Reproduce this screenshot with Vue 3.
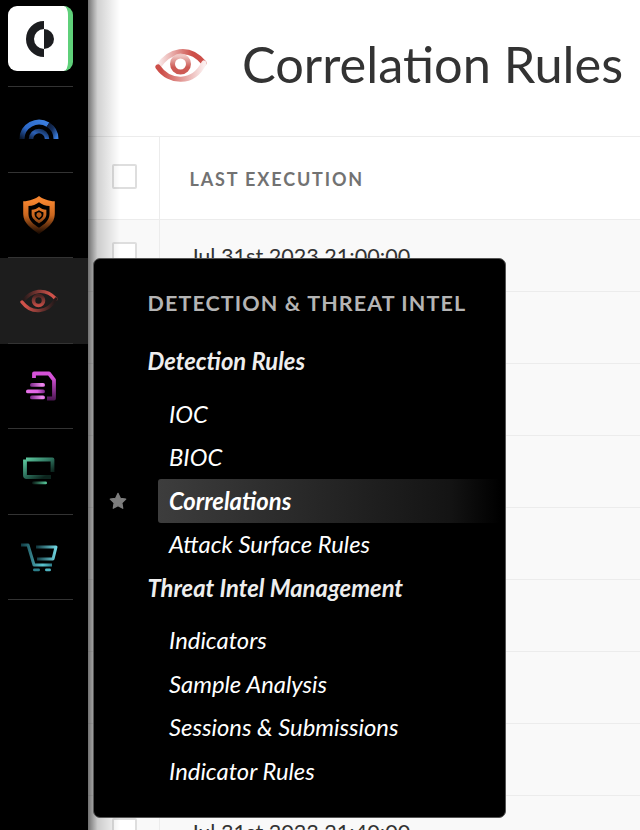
<script setup>
const dates = ['Jul 31st 2023 21:00:00','','','','','','','','Jul 31st 2023 21:40:00']
const groups = [
  { title: 'Detection Rules', items: ['IOC','BIOC','Correlations','Attack Surface Rules'] },
  { title: 'Threat Intel Management', items: ['Indicators','Sample Analysis','Sessions & Submissions','Indicator Rules'] },
]
</script>

<template>
  <div class="page">
    <aside class="rail">
      <div class="rail-cell logo-cell">
        <div class="logo">
          <svg class="logo-mark" width="28" height="36" viewBox="0 0 28 36">
            <path d="M18 0 A18 18 0 0 0 18 36 V28 A10 10 0 0 1 18 8 Z" fill="#1c1d20"/>
            <path d="M18 8 A10 10 0 0 1 18 28 Z" fill="#1c1d20"/>
          </svg>
        </div>
      </div>
      <div class="rail-cell">
        <svg class="ic-blue" width="40" height="22" viewBox="0 0 40 22">
          <defs>
            <linearGradient id="blue" x1="0" y1="1" x2="1" y2="0"><stop offset="0" stop-color="#0a1830"/><stop offset=".4" stop-color="#2c68c8"/><stop offset="1" stop-color="#3b7fe0"/></linearGradient>
            <linearGradient id="blue2" x1="0" y1="0" x2="1" y2="1"><stop offset="0" stop-color="#0e1c38"/><stop offset=".45" stop-color="#16305e"/><stop offset="1" stop-color="#3b7fe0"/></linearGradient>
            <linearGradient id="blue3" x1="0" y1="1" x2="1" y2="0"><stop offset="0" stop-color="#12284e"/><stop offset=".5" stop-color="#2c62b8"/><stop offset="1" stop-color="#122a50"/></linearGradient>
          </defs>
          <path d="M3 21 A17 17 0 0 1 29 6.7" fill="none" stroke="url(#blue)" stroke-width="5"/>
          <path d="M29 6.7 A17 17 0 0 1 37 21" fill="none" stroke="url(#blue2)" stroke-width="5"/>
          <path d="M12 21 A8 8 0 0 1 28 21" fill="none" stroke="url(#blue3)" stroke-width="4.5"/>
        </svg>
      </div>
      <div class="rail-cell">
        <svg width="36" height="40" viewBox="0 0 34 38">
          <defs><linearGradient id="org" gradientUnits="userSpaceOnUse" x1="0" y1="6" x2="0" y2="36"><stop offset="0" stop-color="#f5842e"/><stop offset=".45" stop-color="#c9661f"/><stop offset="1" stop-color="#1d0c02"/></linearGradient></defs>
          <path d="M17 1 C20 3.5 26 6 32 6 V18 C32 27 24 32 17 37 C10 32 2 27 2 18 V6 C8 6 14 3.5 17 1 Z" fill="url(#org)"/>
          <path d="M17 7 C20 9 23 10.5 27 10.5 V18 C27 24 22 28 17 31 C12 28 7 24 7 18 V10.5 C11 10.5 14 9 17 7 Z" fill="#000"/>
          <path d="M17 11.5 C19 13 21 14 24 14 V18.5 C24 22 20 25 17 27 C14 25 10 22 10 18.5 V14 C13 14 15 13 17 11.5 Z" fill="url(#org)"/>
          <path d="M17 14.5 C18.5 15.5 20 16.3 21.2 16.4 V18.5 C21.2 20.6 19 22.6 17 23.8 C15 22.6 12.8 20.6 12.8 18.5 V16.4 C14 16.3 15.5 15.5 17 14.5 Z" fill="#000"/>
          <path d="M17 16.5 C18.5 16.5 19.5 17.7 19.5 19 C19.5 20.2 18 21.5 17 22 C16 21.5 14.5 20.2 14.5 19 C14.5 17.7 15.5 16.5 17 16.5 Z" fill="#b85d1c"/>
        </svg>
      </div>
      <div class="rail-cell active">
        <svg width="38" height="26" viewBox="0 0 38 26">
          <defs>
            <linearGradient id="eyeA" x1="0" y1="0" x2="1" y2="0"><stop offset=".05" stop-color="#241a1a"/><stop offset=".85" stop-color="#d0524a"/></linearGradient>
            <linearGradient id="eyeB" x1="0" y1="0" x2="1" y2="0"><stop offset=".1" stop-color="#d0524a"/><stop offset=".95" stop-color="#241a1a"/></linearGradient>
            <linearGradient id="eyeC" x1="0" y1="0" x2="0" y2="1"><stop offset="0" stop-color="#4a2422"/><stop offset="1" stop-color="#c04c45"/></linearGradient>
          </defs>
          <path d="M2 14 C11 2 25 -1 36 11" fill="none" stroke="url(#eyeA)" stroke-width="3.4" stroke-linecap="round"/>
          <path d="M2 14 C11 26 27 26 36 11" fill="none" stroke="url(#eyeB)" stroke-width="3.4" stroke-linecap="round"/>
          <circle cx="18.5" cy="12.5" r="5" fill="none" stroke="url(#eyeC)" stroke-width="3.6"/>
        </svg>
      </div>
      <div class="rail-cell">
        <svg width="34" height="32" viewBox="0 0 34 32">
          <defs>
            <linearGradient id="pk" gradientUnits="userSpaceOnUse" x1="0" y1="2" x2="0" y2="30"><stop offset=".2" stop-color="#d552d8"/><stop offset="1" stop-color="#4c1653"/></linearGradient>
            <linearGradient id="pk2" x1="0" y1="0" x2="1" y2="0"><stop offset="0" stop-color="#7a2688"/><stop offset=".8" stop-color="#f08af0"/><stop offset="1" stop-color="#e270e6"/></linearGradient>
            <linearGradient id="pk3" x1="0" y1="0" x2="1" y2="0"><stop offset="0" stop-color="#e873e8"/><stop offset=".6" stop-color="#e063e4"/><stop offset="1" stop-color="#7a2688"/></linearGradient>
          </defs>
          <path d="M12 8 V3.5 H27 L32 10 V28.5 H25" fill="none" stroke="url(#pk)" stroke-width="3.8" stroke-linejoin="round"/>
          <rect x="8" y="13" width="15" height="3.8" rx="1.9" fill="url(#pk2)"/>
          <rect x="4" y="19.5" width="19" height="3.8" rx="1.9" fill="url(#pk3)"/>
          <rect x="8" y="25.5" width="15" height="3.8" rx="1.9" fill="url(#pk2)"/>
        </svg>
      </div>
      <div class="rail-cell">
        <svg class="ic-mon" width="32" height="28" viewBox="0 0 32 28">
          <defs>
            <linearGradient id="gr" x1="0" y1="0" x2="1" y2="1"><stop offset="0" stop-color="#5cc79d"/><stop offset=".45" stop-color="#2f7560"/><stop offset=".85" stop-color="#0c241d"/></linearGradient>
            <linearGradient id="gr2" x1="0" y1="0" x2="1" y2="0"><stop offset="0" stop-color="#071410"/><stop offset="1" stop-color="#5bcfa0"/></linearGradient>
          </defs>
          <path d="M3 2.5 H29.5 V15 M28 20 H3.5 Q2 20 2 18.5 V2.5" fill="none" stroke="url(#gr)" stroke-width="3.8" stroke-linejoin="round"/>
          <rect x="9" y="24.5" width="15" height="2.8" rx="1.4" fill="url(#gr2)"/>
        </svg>
      </div>
      <div class="rail-cell">
        <svg width="38" height="30" viewBox="0 0 38 30">
          <defs>
            <linearGradient id="cy" x1="0" y1="0" x2="1" y2="0"><stop offset="0" stop-color="#0e343b"/><stop offset="1" stop-color="#6fd4df"/></linearGradient>
            <linearGradient id="cy2" x1="0" y1="0" x2="1" y2="0"><stop offset="0" stop-color="#0f3a42"/><stop offset=".7" stop-color="#5ac4cf"/><stop offset="1" stop-color="#2d7c88"/></linearGradient>
          </defs>
          <path d="M1 3 H8 L14 23 H32" fill="none" stroke="url(#cy2)" stroke-width="3" stroke-linejoin="round"/>
          <path d="M16 5 H36 L33 17 H17" fill="none" stroke="url(#cy)" stroke-width="3" stroke-linejoin="round"/>
          <rect x="13" y="26.5" width="7" height="2.8" rx="1.4" fill="#2d7f8a"/>
          <rect x="25" y="26.5" width="6" height="2.8" rx="1.4" fill="#4eb3c0"/>
        </svg>
      </div>
    </aside>

    <main class="main">
      <header class="head">
        <svg class="head-eye" width="52" height="36" viewBox="0 0 52 36">
          <defs>
            <linearGradient id="hA" x1="0" y1="0" x2="1" y2="0"><stop offset="0" stop-color="#fbeeee"/><stop offset=".75" stop-color="#cd4f49"/></linearGradient>
            <linearGradient id="hB" x1="0" y1="0" x2="1" y2="0"><stop offset=".08" stop-color="#cd4f49"/><stop offset="1" stop-color="#fbeeee"/></linearGradient>
            <linearGradient id="hC" x1="0" y1="0" x2="0" y2="1"><stop offset="0" stop-color="#efc6c3"/><stop offset=".7" stop-color="#cd5a54"/></linearGradient>
          </defs>
          <path d="M3 20 C14 3 34 -2 49 16" fill="none" stroke="url(#hA)" stroke-width="5.2" stroke-linecap="round"/>
          <path d="M3 20 C14 36 38 38 49 16" fill="none" stroke="url(#hB)" stroke-width="5.2" stroke-linecap="round"/>
          <circle cx="25.5" cy="17" r="8" fill="none" stroke="url(#hC)" stroke-width="5"/>
        </svg>
        <h1>Correlation Rules</h1>
      </header>
      <div class="row th">
        <div class="check-col"><span class="box"></span></div>
        <div class="cell label">LAST EXECUTION</div>
      </div>
      <div v-for="(d, i) in dates" :key="i" class="row">
        <div class="check-col"><span class="box"></span></div>
        <div class="cell">{{ d }}</div>
      </div>
    </main>

    <div class="shade"></div>

    <nav class="menu">
      <div class="menu-title">DETECTION &amp; THREAT INTEL</div>
      <template v-for="g in groups" :key="g.title">
        <div class="group" :class="{ second: g.title.startsWith('Threat') }">{{ g.title }}</div>
        <div v-for="it in g.items" :key="it" class="item" :class="{ current: it === 'Correlations' }">
          <svg v-if="it === 'Correlations'" class="star" width="18" height="18" viewBox="0 0 24 24"><path d="M12 1.8 L15.2 8.4 L22.4 9.4 L17.2 14.5 L18.4 21.8 L12 18.3 L5.6 21.8 L6.8 14.5 L1.6 9.4 L8.8 8.4 Z" fill="#7d7d7d" stroke="#7d7d7d" stroke-width="1.5" stroke-linejoin="round"/></svg>
          <span class="pill">{{ it }}</span>
        </div>
      </template>
    </nav>
  </div>
</template>

<style scoped>
.page { position: relative; width: 640px; height: 830px; overflow: hidden; background: #fff; font-family: Lato, "Open Sans", sans-serif; display: flex; }
.rail { width: 88px; flex: none; height: 830px; background: #000; z-index: 3; }
.rail-cell { height: 85.5px; display: flex; align-items: center; justify-content: center; position: relative; padding-right: 10px; box-sizing: border-box; }
.rail-cell::after { content: ""; position: absolute; left: 8px; width: 65px; bottom: 0; height: 1px; background: #333; }
.logo-cell { height: 87px; padding: 6px 0 0 8px; align-items: flex-start; justify-content: flex-start; }
.logo { width: 65px; height: 65px; border-radius: 9px; background: #fff; border-right: 5px solid #5fd07a; box-sizing: border-box; display: flex; align-items: center; justify-content: flex-start; padding-left: 18px; }
.ic-blue { margin-bottom: 2px; }
.ic-mon { margin-bottom: 2px; }
.active { background: #1d1d1d; }
.main { flex: 1; min-width: 0; }
.head { display: flex; align-items: center; gap: 35px; padding: 0 0 8px 67px; border-bottom: 1px solid #ececec; box-sizing: content-box; height: 128px; }
.head-eye { flex: none; margin-top: 2px; }
h1 { margin: 0; font-size: 50.5px; font-weight: 400; color: #333; white-space: nowrap; line-height: 1; }
.row { display: flex; height: 71px; border-bottom: 1px solid #ececec; background: #f9f9f9; }
.th { height: 82px; background: #fff; }
.check-col { width: 72px; flex: none; border-right: 1px solid #ececec; display: flex; padding-left: 24px; box-sizing: border-box; align-items: center; }
.box { width: 25px; height: 25px; border: 2px solid #dedede; border-radius: 2px; background: #fff; box-sizing: border-box; margin-top: -3px; }
.cell { padding-left: 29.5px; font-size: 21.6px; color: #333; display: flex; align-items: center; white-space: nowrap; }
.label { font-size: 18px; font-weight: 700; letter-spacing: 1.85px; color: #727272; padding-top: 2px; }
.shade { position: absolute; left: 88px; top: 0; width: 32px; height: 830px; background: linear-gradient(90deg, rgba(0,0,0,.55), rgba(0,0,0,.18) 30%, rgba(0,0,0,0)); z-index: 2; }
.menu { position: absolute; left: 93px; top: 258px; width: 413px; height: 560px; box-sizing: border-box; background: #000; border-radius: 7px; border: 1px solid #555; z-index: 4; padding: 30px 0 0 53.5px; color: #fff; }
.menu-title { font-size: 21.5px; font-weight: 700; letter-spacing: 1.1px; color: #b4b4b4; line-height: 28px; white-space: nowrap; }
.group { font-size: 23.8px; font-weight: 700; font-style: italic; color: #eee; margin-top: 29px; line-height: 30px; white-space: nowrap; }
.group.second { margin-top: 6.5px; }
.item { position: relative; height: 43.5px; font-style: italic; font-size: 23.8px; display: flex; align-items: center; margin-left: 10.5px; }
.group + .item { margin-top: 16px; }
.pill { display: block; width: 342px; height: 44px; line-height: 44px; padding-left: 11px; box-sizing: border-box; border-radius: 3px; white-space: nowrap; }
.current .pill { font-weight: 700; background: linear-gradient(90deg, #3d3d3d, #141414 85%, #000); }
.star { position: absolute; left: -49px; top: 13px; }
</style>
